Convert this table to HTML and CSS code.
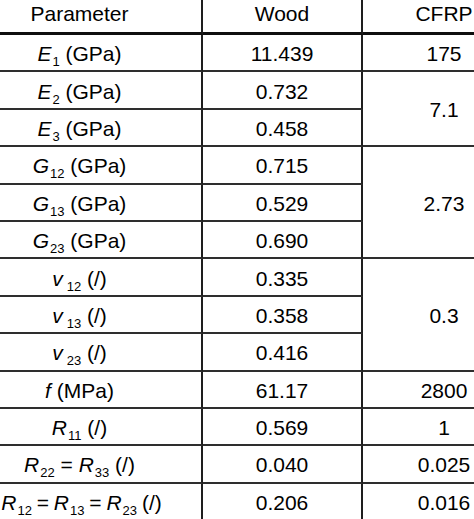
FILE: index.html
```html
<!DOCTYPE html>
<html>
<head>
<meta charset="utf-8">
<link rel="stylesheet" href="styles.css">
</head>
<body>
<div class="frame">
  <div class="tbl">
    <div class="cell c1 head"><span>Parameter</span></div>
    <div class="cell c2 head"><span>Wood</span></div>
    <div class="cell c3 head"><span>CFRP</span></div>

    <div class="cell c1"><span><i>E</i><sub>1</sub> (GPa)</span></div>
    <div class="cell c2"><span>11.439</span></div>
    <div class="cell c3"><span>175</span></div>

    <div class="cell c1"><span><i>E</i><sub>2</sub> (GPa)</span></div>
    <div class="cell c2"><span>0.732</span></div>
    <div class="cell c3 span2"><span>7.1</span></div>

    <div class="cell c1"><span><i>E</i><sub>3</sub> (GPa)</span></div>
    <div class="cell c2"><span>0.458</span></div>

    <div class="cell c1"><span><i>G</i><sub>12</sub> (GPa)</span></div>
    <div class="cell c2"><span>0.715</span></div>
    <div class="cell c3 span3"><span>2.73</span></div>

    <div class="cell c1"><span><i>G</i><sub>13</sub> (GPa)</span></div>
    <div class="cell c2"><span>0.529</span></div>

    <div class="cell c1"><span><i>G</i><sub>23</sub> (GPa)</span></div>
    <div class="cell c2"><span>0.690</span></div>

    <div class="cell c1"><span><i>v</i><sub class="wide">12</sub> (/)</span></div>
    <div class="cell c2"><span>0.335</span></div>
    <div class="cell c3 span3"><span>0.3</span></div>

    <div class="cell c1"><span><i>v</i><sub class="wide">13</sub> (/)</span></div>
    <div class="cell c2"><span>0.358</span></div>

    <div class="cell c1"><span><i>v</i><sub class="wide">23</sub> (/)</span></div>
    <div class="cell c2"><span>0.416</span></div>

    <div class="cell c1"><span><i>f</i> (MPa)</span></div>
    <div class="cell c2"><span>61.17</span></div>
    <div class="cell c3"><span>2800</span></div>

    <div class="cell c1"><span><i>R</i><sub>11</sub> (/)</span></div>
    <div class="cell c2"><span>0.569</span></div>
    <div class="cell c3"><span>1</span></div>

    <div class="cell c1"><span><i>R</i><sub>22</sub> = <i>R</i><sub>33</sub> (/)</span></div>
    <div class="cell c2"><span>0.040</span></div>
    <div class="cell c3"><span>0.025</span></div>

    <div class="cell c1 last"><span class="tight"><i>R</i><sub>12</sub> = <i>R</i><sub>13</sub> = <i>R</i><sub>23</sub> (/)</span></div>
    <div class="cell c2"><span>0.206</span></div>
    <div class="cell c3"><span>0.016</span></div>
  </div>
</div>
</body>
</html>
```

FILE: styles.css
```css
html, body {
  margin: 0;
  padding: 0;
  background: #ffffff;
}

.frame {
  width: 474px;
  height: 519px;
  overflow: hidden;
  position: relative;
}

.tbl {
  display: grid;
  grid-template-columns: 245px 160px 162px;
  grid-template-rows: 39px repeat(13, 37.4px);
  margin-top: -4px;
  margin-left: -42px;
  font-family: "Liberation Sans", Arial, sans-serif;
  font-size: 21px;
  color: #000000;
}

.cell {
  box-sizing: border-box;
  display: flex;
  align-items: center;
  justify-content: center;
  border-bottom: 2px solid #2e2e2e;
  padding-top: 3px;
  white-space: nowrap;
}

.cell > span {
  line-height: 24px;
}

.c1 { grid-column: 1; border-right: 2px solid #1e1e1e; }
.c2 { grid-column: 2; border-right: 2px solid #1e1e1e; }
.c3 { grid-column: 3; }

.head {
  border-bottom: 3px solid #0e0e0e;
  padding-top: 0;
}

.span2 { grid-row: span 2; }
.span3 { grid-row: span 3; }

.cell i {
  font-style: italic;
}

.cell sub {
  font-size: 13px;
  vertical-align: -5px;
  line-height: 0;
  margin-left: 1px;
}

.cell sub.wide {
  margin-left: 4px;
}

.cell > span.tight {
  word-spacing: -1px;
}

.last {
  padding-left: 4px;
}
```
